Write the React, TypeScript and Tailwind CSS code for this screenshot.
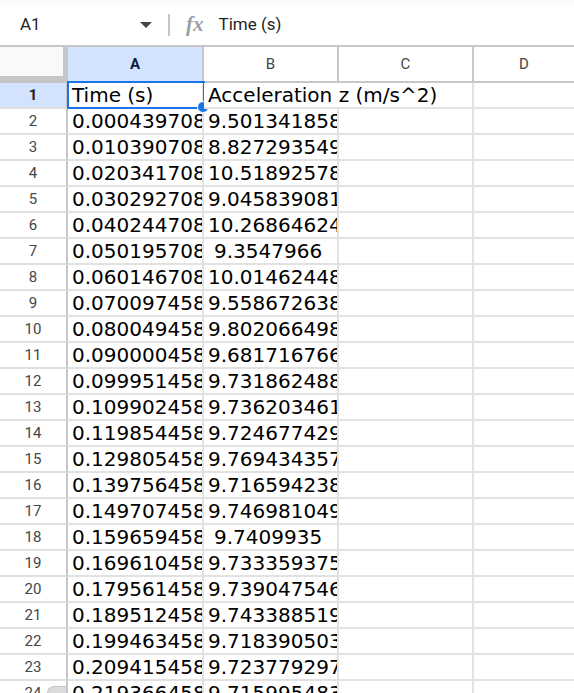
const rows: [string, string, boolean?][] = [
  ["0.000439708", "9.501341858"],
  ["0.010390708", "8.827293549"],
  ["0.020341708", "10.51892578"],
  ["0.030292708", "9.045839081"],
  ["0.040244708", "10.26864624"],
  ["0.050195708", "9.3547966", true],
  ["0.060146708", "10.01462448"],
  ["0.070097458", "9.558672638"],
  ["0.080049458", "9.802066498"],
  ["0.090000458", "9.681716766"],
  ["0.099951458", "9.731862488"],
  ["0.109902458", "9.736203461"],
  ["0.119854458", "9.724677429"],
  ["0.129805458", "9.769434357"],
  ["0.139756458", "9.716594238"],
  ["0.149707458", "9.746981049"],
  ["0.159659458", "9.7409935", true],
  ["0.169610458", "9.733359375"],
  ["0.179561458", "9.739047546"],
  ["0.189512458", "9.743388519"],
  ["0.199463458", "9.718390503"],
  ["0.209415458", "9.723779297"],
  ["0.219366458", "9.715995483"],
];

const cellFont = { fontFamily: '"DejaVu Sans", Verdana, sans-serif' };

function Row({
  n,
  a,
  b,
  shortB,
  header,
}: {
  n: number;
  a: string;
  b: string;
  shortB?: boolean;
  header?: boolean;
}) {
  return (
    <div className="flex h-[26px] shrink-0">
      <div
        className={`flex w-[68px] shrink-0 items-center justify-center border-r-2 border-b-2 border-r-[#c7c7c7] border-b-[#e0e0e0] text-[15px] ${
          header ? "bg-[#d3e3fd] font-bold text-[#1f1f1f]" : "bg-white text-[#444746]"
        }`}
      >
        {n}
      </div>
      <div className="flex w-[136px] shrink-0 items-center overflow-hidden whitespace-nowrap border-r-2 border-b-2 border-[#e2e2e2] pl-[4px] text-[20px] leading-none text-black" style={cellFont}>
        {a}
      </div>
      <div
        className={`flex w-[135px] shrink-0 items-center whitespace-nowrap border-b-2 border-[#e2e2e2] text-[20px] leading-none text-black ${
          header
            ? "relative z-10 overflow-visible bg-white pl-[4px]"
            : shortB
              ? "overflow-hidden border-r-2 pl-[10px]"
              : "overflow-hidden border-r-2 pl-[4px]"
        }`}
        style={cellFont}
      >
        {b}
      </div>
      <div className="w-[135px] shrink-0 border-r-2 border-b-2 border-[#e2e2e2]" />
      <div className="flex-1 border-b-2 border-[#e2e2e2]" />
    </div>
  );
}

export default function App() {
  return (
    <div
      className="relative h-[693px] w-[574px] overflow-hidden bg-white"
      style={{ fontFamily: 'Roboto, Arial, "Liberation Sans", sans-serif' }}
    >
      <div className="h-[5px] bg-[#f9fbfd]" />

      {/* formula bar */}
      <div className="flex h-[40px] items-center text-[17px] text-[#1f1f1f]">
        <div className="w-[120px] pl-[20px]">A1</div>
        <svg width="12" height="6" viewBox="0 0 12 6" className="ml-[20px]">
          <polygon points="0,0 12,0 6,6" fill="#444746" />
        </svg>
        <div className="ml-[16px] h-[22px] w-[2px] bg-[#c4c7c5]" />
        <span
          className="ml-[16px] text-[21px] font-bold italic text-[#9aa0a6]"
          style={{ fontFamily: '"Liberation Serif", "DejaVu Serif", serif' }}
        >
          fx
        </span>
        <span className="ml-[15px] text-[17px]">Time (s)</span>
      </div>

      {/* column headers */}
      <div className="flex h-[38px] border-t-2 border-[#c7c7c7] text-[15px] text-[#444746]">
        <div className="w-[68px] shrink-0 border-r-[5px] border-b-[7px] border-[#c4c7c5] bg-[#f8f9fa]" />
        <div className="flex w-[136px] shrink-0 items-center justify-center border-r-2 border-b-2 border-[#c7c7c7] bg-[#d3e3fd] font-bold text-[#0b1f3f]">
          A
        </div>
        <div className="flex w-[135px] shrink-0 items-center justify-center border-r-2 border-b-2 border-[#c7c7c7]">
          B
        </div>
        <div className="flex w-[135px] shrink-0 items-center justify-center border-r-2 border-b-2 border-[#c7c7c7]">
          C
        </div>
        <div className="flex flex-1 items-center justify-center border-b-2 border-[#c7c7c7]">
          D
        </div>
      </div>

      {/* grid */}
      <div className="flex flex-col">
        <Row n={1} a="Time (s)" b="Acceleration z (m/s^2)" header />
        {rows.map(([a, b, s], i) => (
          <Row key={i} n={i + 2} a={a} b={b} shortB={s} />
        ))}
      </div>

      {/* selection A1 */}
      <div className="pointer-events-none absolute left-[67px] top-[81px] h-[28px] w-[138px] border-2 border-[#1a73e8]" />
      <div className="absolute left-[197px] top-[101px] h-[12px] w-[12px] rounded-full border border-white bg-[#1a73e8]" />

      {/* scrollbar peek */}
      <div className="absolute left-[47px] top-[686px] h-[14px] w-[19px] rounded-l-full border border-r-0 border-[#c4c4c4] bg-[#dcdcdc]" />
    </div>
  );
}
